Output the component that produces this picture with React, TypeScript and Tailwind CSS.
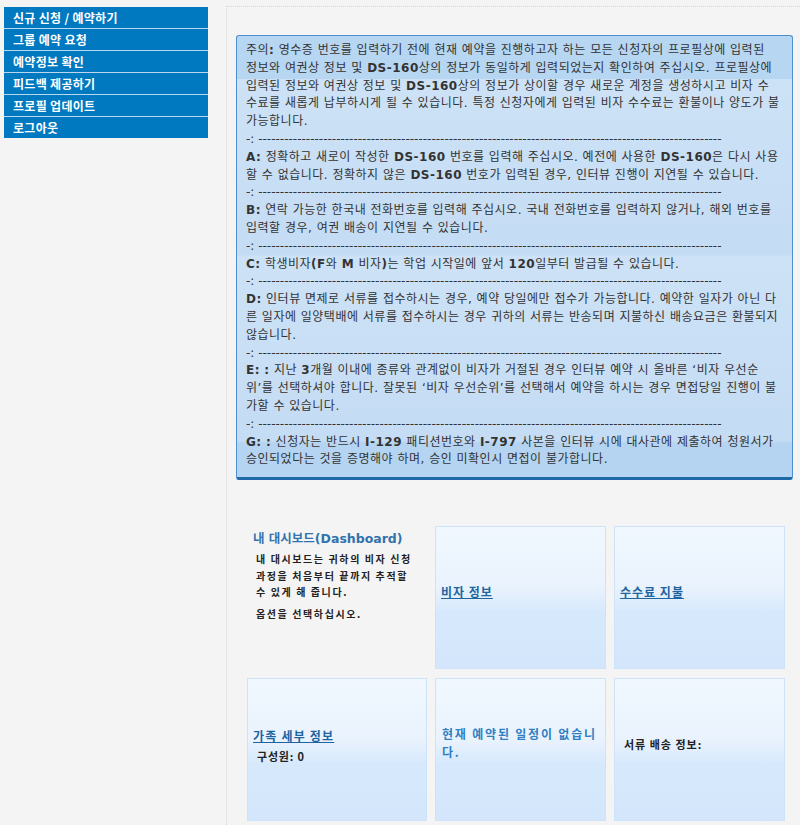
/**
 * Visa dashboard — side menu, notice box and dashboard tiles.
 */
import React from 'react';

const menuItems = [
  '신규 신청 / 예약하기',
  '그룹 예약 요청',
  '예약정보 확인',
  '피드백 제공하기',
  '프로필 업데이트',
  '로그아웃',
];

const DASHES = '-: ' + '-'.repeat(107);

const notes = [
  '주의: 영수증 번호를 입력하기 전에 현재 예약을 진행하고자 하는 모든 신청자의 프로필상에 입력된 정보와 여권상 정보 및 DS-160상의 정보가 동일하게 입력되었는지 확인하여 주십시오. 프로필상에 입력된 정보와 여권상 정보 및 DS-160상의 정보가 상이할 경우 새로운 계정을 생성하시고 비자 수수료를 새롭게 납부하시게 될 수 있습니다. 특정 신청자에게 입력된 비자 수수료는 환불이나 양도가 불가능합니다.',
  'A: 정확하고 새로이 작성한 DS-160 번호를 입력해 주십시오. 예전에 사용한 DS-160은 다시 사용할 수 없습니다. 정확하지 않은 DS-160 번호가 입력된 경우, 인터뷰 진행이 지연될 수 있습니다.',
  'B: 연락 가능한 한국내 전화번호를 입력해 주십시오. 국내 전화번호를 입력하지 않거나, 해외 번호를 입력할 경우, 여권 배송이 지연될 수 있습니다.',
  'C: 학생비자(F와 M 비자)는 학업 시작일에 앞서 120일부터 발급될 수 있습니다.',
  'D: 인터뷰 면제로 서류를 접수하시는 경우, 예약 당일에만 접수가 가능합니다. 예약한 일자가 아닌 다른 일자에 일양택배에 서류를 접수하시는 경우 귀하의 서류는 반송되며 지불하신 배송요금은 환불되지 않습니다.',
  'E: : 지난 3개월 이내에 종류와 관계없이 비자가 거절된 경우 인터뷰 예약 시 올바른 ‘비자 우선순위’를 선택하셔야 합니다. 잘못된 ‘비자 우선순위’를 선택해서 예약을 하시는 경우 면접당일 진행이 불가할 수 있습니다.',
  'G: : 신청자는 반드시 I-129 패티션번호와 I-797 사본을 인터뷰 시에 대사관에 제출하여 청원서가 승인되었다는 것을 증명해야 하며, 승인 미확인시 면접이 불가합니다.',
];

// Latin runs render bold in the original notice
function NoteText({ text }: { text: string }) {
  const parts = text.split(/([A-Za-z0-9():\-]+)/);
  return (
    <>
      {parts.map((p, i) => (i % 2 === 1 ? <b key={i}>{p}</b> : <React.Fragment key={i}>{p}</React.Fragment>))}
    </>
  );
}

const tile =
  'border border-[#cce3fa] bg-[linear-gradient(180deg,#f0f7fe_0%,#eaf3fd_42%,#d6e9fc_60%,#d3e6fb_100%)] flex flex-col justify-center';

export default function App() {
  return (
    <div className="min-h-[825px] bg-[#f4f4f4] flex pt-[6px] font-[family-name:DejaVu_Sans,Noto_Sans_CJK_KR,sans-serif]">
      {/* Side menu */}
      <nav className="ml-[4px] mt-[1px] w-[204px] shrink-0 self-start flex flex-col gap-px bg-[#b9d8ee]">
        {menuItems.map((item) => (
          <a
            key={item}
            href="#"
            className="h-[21px] bg-[#0079c1] pl-[9px] flex items-center text-[12px] font-bold tracking-[0.3px] text-white font-[family-name:Noto_Sans_CJK_KR,sans-serif]"
          >
            {item}
          </a>
        ))}
      </nav>

      {/* Main content */}
      <main className="ml-[18px] flex-1 border-l border-t border-dotted border-[#d6d6d6] pt-[28px] pl-[9px] pr-[7px]">
        <div className="rounded-[3px] border border-[#4d8fcf] border-b-[3px] border-b-[#1e6aa6] bg-[linear-gradient(180deg,#b7d6f2_0px,#b7d6f2_43px,#cde2f6_43px,#c4dcf4_219px,#cde2f6_220px,#c4dcf4_405px,#b4d4f1_407px,#b4d4f1_100%)] pl-[9px] pr-[12px] pt-[6px] pb-[8px] text-[12px] leading-[17.8px] tracking-[0.5px] text-[#333]">
          {notes.map((n, i) => (
            <React.Fragment key={i}>
              {i > 0 && <div className="whitespace-nowrap overflow-hidden tracking-normal">{DASHES}</div>}
              <div>
                <NoteText text={n} />
              </div>
            </React.Fragment>
          ))}
        </div>

        {/* Dashboard */}
        <div className="mt-[46px] ml-[11px] grid grid-cols-[180px_171px_171px] grid-rows-[143px_143px] gap-x-[8px] gap-y-[9px]">
          <div className="pl-[6px] pt-[4px]">
            <h2 className="text-[12.5px] font-bold text-[#3272ad] leading-[18px]">내 대시보드(Dashboard)</h2>
            <p className="mt-[3px] ml-[3px] w-[163px] text-[10px] font-bold tracking-[1.6px] leading-[16.5px] text-[#222] font-[family-name:Noto_Sans_CJK_KR,sans-serif]">
              내 대시보드는 귀하의 비자 신청 과정을 처음부터 끝까지 추적할 수 있게 해 줍니다.
            </p>
            <p className="mt-[5px] ml-[3px] text-[10px] font-bold tracking-[1.6px] leading-[16px] text-[#222] font-[family-name:Noto_Sans_CJK_KR,sans-serif]">
              옵션을 선택하십시오.
            </p>
          </div>
          <div className={tile}>
            <a href="#" className="ml-[5px] -mt-[12px] text-[12px] font-bold tracking-[1px] text-[#1d64a0] underline font-[family-name:Noto_Sans_CJK_KR,sans-serif]">
              비자 정보
            </a>
          </div>
          <div className={tile}>
            <a href="#" className="ml-[5px] -mt-[12px] text-[12px] font-bold tracking-[1px] text-[#1d64a0] underline font-[family-name:Noto_Sans_CJK_KR,sans-serif]">
              수수료 지불
            </a>
          </div>

          <div className={tile}>
            <div className="pl-[5px] -mt-[14px] font-[family-name:Noto_Sans_CJK_KR,sans-serif]">
              <a href="#" className="text-[12px] font-bold tracking-[1.2px] text-[#1d64a0] underline leading-[18px]">
                가족 세부 정보
              </a>
              <div className="ml-[4px] mt-[2px] text-[11px] font-bold tracking-[0.8px] text-[#222] leading-[16px]">구성원: 0</div>
            </div>
          </div>
          <div className={tile}>
            <p className="pl-[6px] pr-[6px] -mt-[14px] text-[12px] font-bold tracking-[1.8px] leading-[18px] text-[#2e7fc4] font-[family-name:Noto_Sans_CJK_KR,sans-serif]">
              현재 예약된 일정이 없습니다.
            </p>
          </div>
          <div className={tile}>
            <p className="pl-[9px] -mt-[10px] text-[11px] font-bold tracking-[1px] text-[#222] font-[family-name:Noto_Sans_CJK_KR,sans-serif]">
              서류 배송 정보:
            </p>
          </div>
        </div>
      </main>
    </div>
  );
}
